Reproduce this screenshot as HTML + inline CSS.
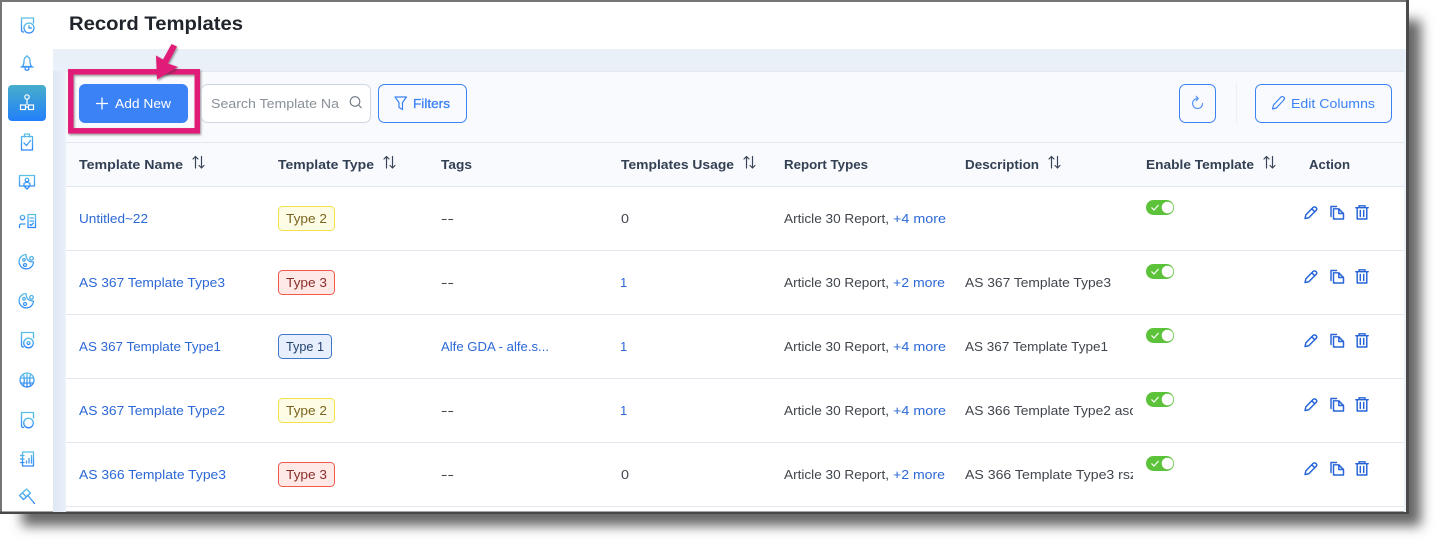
<!DOCTYPE html>
<html><head><meta charset="utf-8"><style>
html,body{margin:0;padding:0;background:#fff;width:1440px;height:545px;overflow:hidden}
svg{display:block}
text{font-family:"Liberation Sans",sans-serif;font-size:13px}
.h{font-weight:700;fill:#334054}
.l{fill:#2c68d6}
.d{fill:#40454d}
.i{fill:none;stroke:url(#ig);stroke-width:1.3;stroke-linecap:round;stroke-linejoin:round}
.a{fill:none;stroke:#2563d8;stroke-width:1.45;stroke-linejoin:round;stroke-linecap:round}
.s{fill:none;stroke:#3a4658;stroke-width:1.2;stroke-linecap:round;stroke-linejoin:round}
.b{fill:none;stroke:#3b82f6;stroke-width:1.2;stroke-linecap:round;stroke-linejoin:round}
</style></head><body>
<svg width="1440" height="545" viewBox="0 0 1440 545" xmlns="http://www.w3.org/2000/svg">
<defs>
<linearGradient id="ig" gradientUnits="objectBoundingBox" x1="0" y1="0" x2="0" y2="1"><stop offset="0" stop-color="#5cc0e4"/><stop offset="1" stop-color="#2f86f8"/></linearGradient>
<linearGradient id="ag" x1="0" y1="0" x2="0" y2="1"><stop offset="0" stop-color="#48aecb"/><stop offset="1" stop-color="#2280fa"/></linearGradient>
<linearGradient id="st" x1="0" y1="0" x2="1" y2="0"><stop offset="0" stop-color="#dfe7f4"/><stop offset="1" stop-color="#ebf1f9"/></linearGradient>
<filter id="bl" x="-5%" y="-10%" width="110%" height="120%"><feGaussianBlur stdDeviation="6"/></filter>
<filter id="ps" x="-20%" y="-20%" width="140%" height="140%"><feDropShadow dx="1" dy="1.5" stdDeviation="1" flood-color="#333" flood-opacity=".5"/></filter>
<clipPath id="dc"><rect x="960" y="187" width="173" height="320"/></clipPath>
<g id="sort"><path class="s" d="M3.5 13V1.500M1 4L3.500 1.500L6 4M9.500 1.500V13M7 10.500L9.500 13L12 10.500"/></g>
<g id="tog"><rect width="28" height="15" rx="7.500" fill="#5cc23a"/><circle cx="21.500" cy="7.500" r="5.800" fill="#fff"/><path d="M5.500 7.500L8 10L12.500 5" fill="none" stroke="#fff" stroke-width="1.200"/></g>
<g id="act">
<path class="a" d="M1 13.500L1.900 9.800L9 2.500Q10.500 1.200 12 2.500Q13.500 4 12 5.500L4.800 12.800ZM7.800 3.800L10.900 6.800"/>
<path class="a" d="M27 11.500V1.500H32.500M29.500 3.800H34.800L39.500 8.500V14H29.500ZM34.800 3.800V8.500H39.500"/>
<path class="a" d="M51.800 2.700H64.200M55 2.500V0.800H61V2.500M53.200 3V14H62.800V3M56.300 5.500V11.500M59.700 5.500V11.500"/>
</g>
</defs>

<rect width="1440" height="545" fill="#fff"/>
<rect x="22" y="20" width="1399" height="506" fill="#666" filter="url(#bl)"/>
<rect x="0" y="0" width="1409" height="514" fill="#757575"/>
<rect x="1406" y="0" width="3" height="514" fill="#4a4a4a"/>
<rect x="0" y="511.500" width="1409" height="2.500" fill="#484848"/>
<rect x="2" y="2" width="1404" height="509.500" fill="#fff"/>

<rect x="53" y="2" width="13" height="510" fill="url(#st)"/>
<rect x="53" y="2" width="1353" height="47" fill="#fff"/>
<rect x="53" y="49" width="1353" height="22" fill="#e9f0f8"/>
<rect x="1404" y="49" width="2" height="463" fill="#ecf2fa"/>
<rect x="66" y="71" width="1338" height="72" fill="#f8fafd"/>
<rect x="66" y="71" width="1338" height="1" fill="#e4e9f0"/>
<rect x="66" y="143" width="1338" height="44" fill="#f8fafd"/>
<g fill="#e2e8f0">
<rect x="66" y="142" width="1338" height="1"/><rect x="66" y="186" width="1338" height="1"/>
<rect x="66" y="250" width="1338" height="1"/><rect x="66" y="314" width="1338" height="1"/>
<rect x="66" y="378" width="1338" height="1"/><rect x="66" y="442" width="1338" height="1"/>
<rect x="66" y="506" width="1338" height="1"/></g>

<text x="69" y="30" font-weight="700" style="font-size:19px" fill="#20242b" textLength="174" lengthAdjust="spacingAndGlyphs">Record Templates</text>

<!-- sidebar -->
<rect x="8" y="85" width="38" height="36" rx="4" fill="url(#ag)"/>
<g class="i">
<path d="M23.500 32Q21.500 32 21.500 30V18H33.500V23"/><circle cx="29" cy="28" r="5"/><path d="M29 25.500V28H31.500"/>
<path d="M27 55.500V56.500M22.500 66.500Q24 64.500 24 61Q24.200 56.800 27 56.500Q29.800 56.800 30 61Q30 64.500 31.500 66.500ZM21 67H33M25.200 67.500V69.500Q27 71 28.800 69.500V67.500"/>
<path d="M21.500 150V136.500H32.500V150ZM24.500 137V134H29.500V137M24 143L26.500 145.500L30.500 140.500"/>
<path d="M19.500 175.500V186H34.500V175.500ZM24 186L27 189L30 186M24 185V183.500Q27 181 30 183.500V185"/><circle cx="27" cy="180" r="1.800"/>
<circle cx="22.500" cy="217.500" r="2.200"/><path d="M19.500 227.500V225.500Q19.500 224 21 224H25M28 214.500H35.500V227.500H28ZM30 218H33.500M30 221H33.500M30 224.500L31 225.500L33.500 223"/>
<path d="M33.500 262A7.200 7.200 0 1 1 26 254.500Q26 259 29 261Q31 262 33.500 262ZM31.500 256.500a1.800 1.800 0 1 0 .01 0M24 258.500a1.300 1.300 0 1 0 .01 0M25 263.500a1.500 1.500 0 1 0 .01 0"/>
<path d="M33.500 301A7.200 7.200 0 1 1 26 293.500Q26 298 29 300Q31 301 33.500 301ZM31.500 295.500a1.800 1.800 0 1 0 .01 0M24 297.500a1.300 1.300 0 1 0 .01 0M25 302.500a1.500 1.500 0 1 0 .01 0"/>
<path d="M23.500 347Q21.500 347 21.500 345V332.500H33.500V338"/><circle cx="28.500" cy="343" r="4.800"/><circle cx="28.500" cy="343" r="1.500"/>
<circle cx="27" cy="380" r="7"/><path d="M20.500 378H33.500M21 383H33M27 373V387M23.500 374Q25 380 23.500 386M30.500 374Q29 380 30.500 386"/>
<path d="M23.500 427.500Q21.500 427.500 21.500 425.500V412.500H33.500V418"/><circle cx="28.500" cy="423" r="4.800"/><path d="M28.500 420.500V423.500M28.500 425.500V425.600"/>
<path d="M22.500 452H33.500V466H22.500ZM20.500 455.500H24M20.500 459H24M20.500 462.500H24M26.500 463V461M29 463V458.500M31.500 463V455.500"/>
<path d="M19.500 495.500L26.500 489L30.500 493L23.500 499.500ZM27.500 495L34.500 503.500M22.500 493L26.500 497"/>
</g>
<g fill="none" stroke="#fff" stroke-width="1.200"><circle cx="27" cy="97" r="2.200"/><rect x="20.500" y="105" width="5" height="4.500"/><rect x="28.500" y="105" width="5" height="4.500"/><path d="M27 99.500V105M25.500 107H28.500"/></g>

<!-- pink box, arrow -->
<rect x="70.800" y="71.800" width="126.500" height="59" fill="none" stroke="#e01f78" stroke-width="5.500" filter="url(#ps)"/>
<path d="M171.500 44L177 46.500L168 63.500L178 67L157 79.500L156 55.500L163 59.500Z" fill="#e01f78" filter="url(#ps)"/>

<!-- toolbar -->
<rect x="79" y="84" width="109" height="39" rx="6" fill="#3b82f6"/>
<path d="M102 97.500V109.500M96 103.500H108" stroke="#fff" stroke-width="1.300" fill="none"/>
<text x="115" y="108" fill="#fff" textLength="56" lengthAdjust="spacingAndGlyphs">Add New</text>
<rect x="201.500" y="84.500" width="169" height="38" rx="6" fill="#fff" stroke="#cdd6e4"/>
<text x="211" y="108" fill="#8a9098" textLength="128" lengthAdjust="spacingAndGlyphs">Search Template Na</text>
<circle cx="355" cy="101.500" r="4.800" fill="none" stroke="#6d7682" stroke-width="1.100"/><path d="M358.500 105L361.500 108" stroke="#6d7682" stroke-width="1.100"/>
<rect x="378.500" y="84.500" width="88" height="38" rx="6" fill="#f8fafd" stroke="#3b82f6"/>
<path class="b" d="M395 97H406.500L402.500 102.500V109.500L399 107.500V102.500Z"/>
<text x="413" y="108" fill="#3b82f6" stroke="#3b82f6" stroke-width=".3" textLength="37" lengthAdjust="spacingAndGlyphs">Filters</text>
<rect x="1179.500" y="84.500" width="36" height="38" rx="6" fill="#f8fafd" stroke="#3b82f6"/>
<path d="M1202.600 103.500A5 5 0 1 1 1197.600 98.500M1196.200 96.300L1198.300 98.500L1196.200 100.700" fill="none" stroke="#5d97f6" stroke-width="1.200" stroke-linecap="round" stroke-linejoin="round"/>
<rect x="1236" y="83" width="1" height="41" fill="#ecf0f5"/>
<rect x="1255.500" y="84.500" width="136" height="38" rx="6" fill="#f8fafd" stroke="#3b82f6"/>
<path class="b" d="M1272.500 109L1273.500 105L1281 97Q1282.500 96 1284 97.300Q1285 98.800 1283.800 100L1276.300 108Z"/>
<text x="1291" y="108" fill="#3b82f6" textLength="84" lengthAdjust="spacingAndGlyphs">Edit Columns</text>

<!-- header -->
<text class="h" x="79" y="169" textLength="104" lengthAdjust="spacingAndGlyphs">Template Name</text>
<use href="#sort" x="192" y="155"/>
<text class="h" x="278" y="169" textLength="96" lengthAdjust="spacingAndGlyphs">Template Type</text>
<use href="#sort" x="383" y="155"/>
<text class="h" x="441" y="169" textLength="31" lengthAdjust="spacingAndGlyphs">Tags</text>
<text class="h" x="621" y="169" textLength="113" lengthAdjust="spacingAndGlyphs">Templates Usage</text>
<use href="#sort" x="743" y="155"/>
<text class="h" x="784" y="169" textLength="84" lengthAdjust="spacingAndGlyphs">Report Types</text>
<text class="h" x="965" y="169" textLength="74" lengthAdjust="spacingAndGlyphs">Description</text>
<use href="#sort" x="1048" y="155"/>
<text class="h" x="1146" y="169" textLength="108" lengthAdjust="spacingAndGlyphs">Enable Template</text>
<use href="#sort" x="1263" y="155"/>
<text class="h" x="1309" y="169" textLength="41" lengthAdjust="spacingAndGlyphs">Action</text>

<!-- row 1 -->
<text class="l" x="79" y="223" textLength="69" lengthAdjust="spacingAndGlyphs">Untitled~22</text>
<rect x="278.500" y="206.500" width="56" height="24" rx="4" fill="#fffce6" stroke="#f5e04e"/>
<text x="286" y="223" fill="#7a6520" textLength="41" lengthAdjust="spacingAndGlyphs">Type 2</text>
<text class="d" x="441" y="223" textLength="13" lengthAdjust="spacingAndGlyphs">--</text>
<text class="d" x="621" y="223" textLength="8" lengthAdjust="spacingAndGlyphs">0</text>
<text class="d" x="784" y="223" textLength="105" lengthAdjust="spacingAndGlyphs">Article 30 Report,</text>
<text class="l" x="893" y="223" textLength="53" lengthAdjust="spacingAndGlyphs">+4 more</text>
<use href="#tog" x="1146" y="200"/>
<use href="#act" x="1304" y="205"/>

<!-- row 2 -->
<text class="l" x="79" y="287" textLength="146" lengthAdjust="spacingAndGlyphs">AS 367 Template Type3</text>
<rect x="278.500" y="270.500" width="56" height="24" rx="4" fill="#ffe9e7" stroke="#ef5a50"/>
<text x="286" y="287" fill="#8a2f2a" textLength="41" lengthAdjust="spacingAndGlyphs">Type 3</text>
<text class="d" x="441" y="287" textLength="13" lengthAdjust="spacingAndGlyphs">--</text>
<text class="l" x="620" y="287">1</text>
<text class="d" x="784" y="287" textLength="105" lengthAdjust="spacingAndGlyphs">Article 30 Report,</text>
<text class="l" x="893" y="287" textLength="52" lengthAdjust="spacingAndGlyphs">+2 more</text>
<text class="d" x="965" y="287" textLength="146" lengthAdjust="spacingAndGlyphs">AS 367 Template Type3</text>
<use href="#tog" x="1146" y="264"/>
<use href="#act" x="1304" y="269"/>

<!-- row 3 -->
<text class="l" x="79" y="351" textLength="142" lengthAdjust="spacingAndGlyphs">AS 367 Template Type1</text>
<rect x="278.500" y="334.500" width="53" height="24" rx="4" fill="#e6effb" stroke="#3f78c8"/>
<text x="286" y="351" fill="#23416f" textLength="38" lengthAdjust="spacingAndGlyphs">Type 1</text>
<text class="l" x="441" y="351" textLength="108" lengthAdjust="spacingAndGlyphs">Alfe GDA - alfe.s...</text>
<text class="l" x="620" y="351">1</text>
<text class="d" x="784" y="351" textLength="105" lengthAdjust="spacingAndGlyphs">Article 30 Report,</text>
<text class="l" x="893" y="351" textLength="53" lengthAdjust="spacingAndGlyphs">+4 more</text>
<text class="d" x="965" y="351" textLength="143" lengthAdjust="spacingAndGlyphs">AS 367 Template Type1</text>
<use href="#tog" x="1146" y="328"/>
<use href="#act" x="1304" y="333"/>

<!-- row 4 -->
<text class="l" x="79" y="415" textLength="146" lengthAdjust="spacingAndGlyphs">AS 367 Template Type2</text>
<rect x="278.500" y="398.500" width="56" height="24" rx="4" fill="#fffce6" stroke="#f5e04e"/>
<text x="286" y="415" fill="#7a6520" textLength="41" lengthAdjust="spacingAndGlyphs">Type 2</text>
<text class="d" x="441" y="415" textLength="13" lengthAdjust="spacingAndGlyphs">--</text>
<text class="l" x="620" y="415">1</text>
<text class="d" x="784" y="415" textLength="105" lengthAdjust="spacingAndGlyphs">Article 30 Report,</text>
<text class="l" x="893" y="415" textLength="53" lengthAdjust="spacingAndGlyphs">+4 more</text>
<g clip-path="url(#dc)"><text class="d" x="965" y="415" textLength="172" lengthAdjust="spacingAndGlyphs">AS 366 Template Type2 asd</text></g>
<use href="#tog" x="1146" y="392"/>
<use href="#act" x="1304" y="397"/>

<!-- row 5 -->
<text class="l" x="79" y="479" textLength="147" lengthAdjust="spacingAndGlyphs">AS 366 Template Type3</text>
<rect x="278.500" y="462.500" width="56" height="24" rx="4" fill="#ffe9e7" stroke="#ef5a50"/>
<text x="286" y="479" fill="#8a2f2a" textLength="41" lengthAdjust="spacingAndGlyphs">Type 3</text>
<text class="d" x="441" y="479" textLength="13" lengthAdjust="spacingAndGlyphs">--</text>
<text class="d" x="621" y="479" textLength="8" lengthAdjust="spacingAndGlyphs">0</text>
<text class="d" x="784" y="479" textLength="105" lengthAdjust="spacingAndGlyphs">Article 30 Report,</text>
<text class="l" x="893" y="479" textLength="52" lengthAdjust="spacingAndGlyphs">+2 more</text>
<g clip-path="url(#dc)"><text class="d" x="965" y="479" textLength="172" lengthAdjust="spacingAndGlyphs">AS 366 Template Type3 rsz</text></g>
<use href="#tog" x="1146" y="456"/>
<use href="#act" x="1304" y="461"/>
</svg>
</body></html>
